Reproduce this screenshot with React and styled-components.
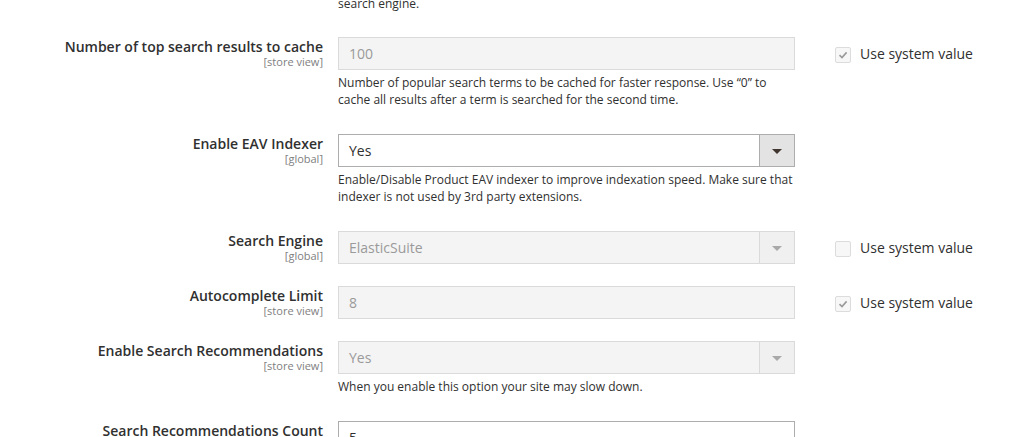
import styled, { createGlobalStyle } from "styled-components";

const GlobalStyle = createGlobalStyle`
  html, body {
    margin: 0;
    padding: 0;
    background: #ffffff;
    overflow: hidden;
  }
  body {
    font-family: "Open Sans", "Liberation Sans", sans-serif;
    color: #303030;
  }
`;

const Page = styled.div`
  display: flex;
  flex-direction: column;
  margin-top: -9px;
`;

const Lead = styled.div`
  display: grid;
  grid-template-columns: 323px 457px;
  column-gap: 15px;
  margin-bottom: 21px;
`;

const Row = styled.div`
  display: grid;
  grid-template-columns: 323px 457px auto;
  column-gap: 15px;
  margin-bottom: 22px;
`;

const Label = styled.div`
  display: flex;
  flex-direction: column;
  align-items: flex-end;
  padding-top: 1px;
  text-align: right;
`;

const Title = styled.span`
  font-size: 14px;
  font-weight: 600;
  line-height: 18px;
  color: #303030;
`;

const Scope = styled.span`
  font-size: 11px;
  line-height: 11px;
  color: #808080;
`;

const Control = styled.div`
  display: flex;
  flex-direction: column;
`;

const Input = styled.div`
  box-sizing: border-box;
  height: 33px;
  display: flex;
  align-items: center;
  padding: 0 10px;
  font-size: 14px;
  border: 1px solid ${(p) => (p.disabled ? "#dadada" : "#adadad")};
  background: ${(p) => (p.disabled ? "#f4f4f4" : "#ffffff")};
  color: ${(p) => (p.disabled ? "#9a9a9a" : "#303030")};
`;

const Select = styled.div`
  box-sizing: border-box;
  height: 33px;
  display: flex;
  font-size: 14px;
  border: 1px solid ${(p) => (p.disabled ? "#dadada" : "#adadad")};
  background: ${(p) => (p.disabled ? "#f4f4f4" : "#ffffff")};
  color: ${(p) => (p.disabled ? "#9a9a9a" : "#303030")};
`;

const SelectValue = styled.span`
  flex: 1;
  display: flex;
  align-items: center;
  padding: 0 10px;
`;

const SelectButton = styled.span`
  width: 34px;
  display: flex;
  align-items: center;
  justify-content: center;
  border-left: 1px solid ${(p) => (p.disabled ? "#dadada" : "#adadad")};
  background: ${(p) => (p.disabled ? "#f0f0f0" : "#e3e3e3")};
`;

const Arrow = styled.span`
  width: 0;
  height: 0;
  margin-top: 2px;
  border-left: 5px solid transparent;
  border-right: 5px solid transparent;
  border-top: 5px solid ${(p) => (p.disabled ? "#a9a9a9" : "#41362f")};
`;

const Note = styled.div`
  margin: 4px 0 4px;
  font-size: 12px;
  line-height: 17px;
  color: #303030;
`;

const SystemValue = styled.label`
  height: 33px;
  display: flex;
  align-items: center;
  gap: 9px;
  margin-left: 25px;
  font-size: 14px;
  color: #303030;
  white-space: nowrap;
`;

const Box = styled.span`
  box-sizing: border-box;
  width: 16px;
  height: 16px;
  margin-top: 3px;
  display: flex;
  align-items: center;
  justify-content: center;
  border: 1px solid #dcdcdc;
  border-radius: 2px;
  background: #f7f7f7;
`;

function Check({ checked }) {
  return (
    <Box>
      {checked && (
        <svg width="10" height="10" viewBox="0 0 10 10">
          <path d="M1.5 5.2 L4 7.6 L8.6 2.4" fill="none" stroke="#9a9a9a" strokeWidth="1.6" />
        </svg>
      )}
    </Box>
  );
}

const fields = [
  {
    title: "Number of top search results to cache",
    scope: "[store view]",
    type: "input",
    value: "100",
    disabled: true,
    system: true,
    note: "Number of popular search terms to be cached for faster response. Use “0” to cache all results after a term is searched for the second time.",
  },
  {
    title: "Enable EAV Indexer",
    scope: "[global]",
    type: "select",
    value: "Yes",
    note: "Enable/Disable Product EAV indexer to improve indexation speed. Make sure that indexer is not used by 3rd party extensions.",
  },
  {
    title: "Search Engine",
    scope: "[global]",
    type: "select",
    value: "ElasticSuite",
    disabled: true,
    system: false,
  },
  {
    title: "Autocomplete Limit",
    scope: "[store view]",
    type: "input",
    value: "8",
    disabled: true,
    system: true,
  },
  {
    title: "Enable Search Recommendations",
    scope: "[store view]",
    type: "select",
    value: "Yes",
    disabled: true,
    note: "When you enable this option your site may slow down.",
  },
  {
    title: "Search Recommendations Count",
    scope: "[store view]",
    type: "input",
    value: "5",
  },
];

export default function App() {
  return (
    <>
      <GlobalStyle />
      <Page>
        <Lead>
          <span />
          <Note>search engine.</Note>
        </Lead>
        {fields.map((f) => (
          <Row key={f.title}>
            <Label>
              <Title>{f.title}</Title>
              <Scope>{f.scope}</Scope>
            </Label>
            <Control>
              {f.type === "input" ? (
                <Input disabled={f.disabled}>{f.value}</Input>
              ) : (
                <Select disabled={f.disabled}>
                  <SelectValue>{f.value}</SelectValue>
                  <SelectButton disabled={f.disabled}>
                    <Arrow disabled={f.disabled} />
                  </SelectButton>
                </Select>
              )}
              {f.note && <Note>{f.note}</Note>}
            </Control>
            {f.system !== undefined && (
              <SystemValue>
                <Check checked={f.system} />
                Use system value
              </SystemValue>
            )}
          </Row>
        ))}
      </Page>
    </>
  );
}
